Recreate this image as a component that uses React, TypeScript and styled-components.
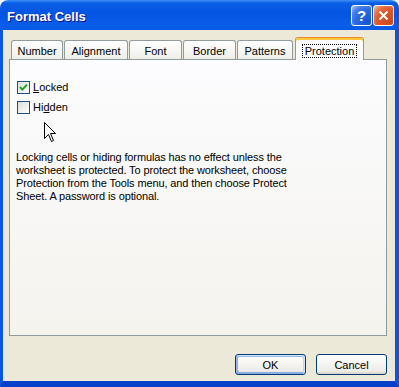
import React from 'react';
import styled, { createGlobalStyle } from 'styled-components';

const GlobalStyle = createGlobalStyle`
  html, body {
    margin: 0;
    padding: 0;
    background: #fff;
  }
  body {
    font-family: "Liberation Sans", Arial, sans-serif;
  }
`;

const Window = styled.div`
  position: relative;
  width: 399px;
  height: 387px;
  display: flex;
  flex-direction: column;
  overflow: hidden;
`;

const TitleBar = styled.div`
  flex: none;
  height: 30px;
  box-sizing: border-box;
  display: flex;
  align-items: center;
  padding: 1px 5px 0 7px;
  border-radius: 8px 8px 0 0;
  background: linear-gradient(180deg, #3d8ff5 0%, #0a5fe6 10%, #0454e2 45%, #0a5ee8 85%, #0658e6 100%);
`;

const Title = styled.div`
  flex: 1;
  color: #fff;
  font: bold 13px "Liberation Sans", Arial, sans-serif;
  text-shadow: 1px 1px #0f1089;
  padding-top: 2px;
`;

const Controls = styled.div`
  display: flex;
  gap: 1px;
`;

const CtrlButton = styled.div<{ $kind: 'help' | 'close' }>`
  width: 21px;
  height: 21px;
  box-sizing: border-box;
  border: 1px solid #fff;
  border-radius: 3px;
  display: flex;
  align-items: center;
  justify-content: center;
  color: #fff;
  font: bold 15px "Liberation Sans", Arial, sans-serif;
  background: ${({ $kind }) =>
    $kind === 'close'
      ? 'radial-gradient(circle at 85% 85%, #c94a1a 0%, #e0582b 55%, #e4744c 75%, #f4b496 95%)'
      : 'radial-gradient(circle at 85% 85%, #1453d8 0%, #2e6be0 55%, #4a80e6 75%, #a3bbec 95%)'};
`;

const Frame = styled.div`
  flex: 1;
  display: flex;
  flex-direction: column;
  background: #ece9d8;
  border-left: 3px solid #0857e4;
  border-right: 4px solid #0857e4;
  border-bottom: 6px solid #0841c9;
  padding: 7px 8px 6px 6px;
`;

const TabStrip = styled.div`
  position: relative;
  z-index: 1;
  display: flex;
  align-items: flex-end;
  height: 23px;
  padding-left: 2px;
  margin-bottom: -1px;
`;

const Tab = styled.div<{ $w: number; $active?: boolean }>`
  box-sizing: border-box;
  width: ${({ $w }) => $w}px;
  height: ${({ $active }) => ($active ? 23 : 19)}px;
  margin: ${({ $active }) => ($active ? '0 0 0 1px' : '0 1px 1px 0')};
  padding-top: ${({ $active }) => ($active ? 6 : 4)}px;
  border: 1px solid #919b9c;
  border-bottom: none;
  border-radius: 3px 3px 0 0;
  text-align: center;
  font-size: 11px;
  line-height: 13px;
  color: #000;
  background: ${({ $active }) =>
    $active ? '#fcfcfe' : 'linear-gradient(180deg, #fff, #fafaf9 26%, #f0f0ea 95%, #ecebe5)'};
  border-top-color: ${({ $active }) => ($active ? '#e68b2c' : '#919b9c')};
  box-shadow: ${({ $active }) => ($active ? 'inset 0 2px #ffc83c' : 'none')};
`;

const FocusLabel = styled.span`
  display: inline-block;
  border: 1px dotted #000;
  padding: 1px 2px 0;
  line-height: 11px;
`;

const Panel = styled.div`
  flex: 1;
  border: 1px solid #919b9c;
  background: linear-gradient(180deg, #fcfcfe, #f4f3ee);
  padding: 21px 6px 0 6px;
`;

const CheckRow = styled.label`
  display: flex;
  align-items: flex-start;
  gap: 3px;
  height: 20px;
  margin-left: 1px;
  font-size: 11px;
  line-height: 13px;
  color: #000;
`;

const Box = styled.span`
  width: 13px;
  height: 13px;
  box-sizing: border-box;
  border: 1px solid #1c5180;
  background: linear-gradient(135deg, #dcdcd7, #fff);
  display: flex;
  align-items: center;
  justify-content: center;
`;

const Key = styled.span`
  text-decoration: underline;
`;

const Note = styled.p`
  margin: 30px 0 0 0;
  font-size: 11px;
  line-height: 13px;
  letter-spacing: -0.12px;
  color: #000;
`;

const ButtonRow = styled.div`
  display: flex;
  justify-content: flex-end;
  gap: 10px;
  margin-top: 18px;
`;

const Button = styled.button<{ $default?: boolean }>`
  width: 71px;
  height: 21px;
  padding: 0;
  border: 1px solid #003c74;
  border-radius: 3px;
  background: linear-gradient(180deg, #fff, #ecebe6 86%, #d6d0c5);
  font: 11px "Liberation Sans", Arial, sans-serif;
  color: #000;
  box-shadow: ${({ $default }) =>
    $default
      ? 'inset -1px 1px #cee7ff, inset 1px 2px #98b8ea, inset -2px 2px #bcd4f6, inset 1px -1px #89ade4, inset 2px -2px #89ade4'
      : 'none'};
`;

const Cursor = styled.svg`
  position: absolute;
  left: 44px;
  top: 122px;
`;

const tabs = [
  { label: 'Number', w: 52 },
  { label: 'Alignment', w: 64 },
  { label: 'Font', w: 53 },
  { label: 'Border', w: 53 },
  { label: 'Patterns', w: 56 },
];

const Check = ({ checked }: { checked?: boolean }) => (
  <Box>
    {checked && (
      <svg width="9" height="9" viewBox="0 0 9 9">
        <path d="M1 4 L3.4 6.6 L8 1.6" fill="none" stroke="#21a121" strokeWidth="2" />
      </svg>
    )}
  </Box>
);

const App = () => (
  <Window>
    <GlobalStyle />
    <TitleBar>
      <Title>Format Cells</Title>
      <Controls>
        <CtrlButton $kind="help">?</CtrlButton>
        <CtrlButton $kind="close">
          <svg width="11" height="11" viewBox="0 0 11 11">
            <path d="M1.5 1.5 L9.5 9.5 M9.5 1.5 L1.5 9.5" stroke="#fff" strokeWidth="2" />
          </svg>
        </CtrlButton>
      </Controls>
    </TitleBar>
    <Frame>
      <TabStrip>
        {tabs.map((t) => (
          <Tab key={t.label} $w={t.w}>{t.label}</Tab>
        ))}
        <Tab $w={69} $active>
          <FocusLabel>Protection</FocusLabel>
        </Tab>
      </TabStrip>
      <Panel>
        <CheckRow>
          <Check checked />
          <span><Key>L</Key>ocked</span>
        </CheckRow>
        <CheckRow>
          <Check />
          <span>Hi<Key>d</Key>den</span>
        </CheckRow>
        <Note>
          Locking cells or hiding formulas has no effect unless the<br />
          worksheet is protected. To protect the worksheet, choose<br />
          Protection from the Tools menu, and then choose Protect<br />
          Sheet. A password is optional.
        </Note>
      </Panel>
      <ButtonRow>
        <Button $default>OK</Button>
        <Button>Cancel</Button>
      </ButtonRow>
    </Frame>
    <Cursor width="13" height="21" viewBox="0 0 13 21">
      <path d="M0.5 0.5 L0.5 16.5 L4.5 12.5 L7.5 19.5 L9.5 18.5 L6.5 11.5 L11.5 11.5 Z" fill="#fff" stroke="#000" strokeWidth="1" />
    </Cursor>
  </Window>
);

export default App;
